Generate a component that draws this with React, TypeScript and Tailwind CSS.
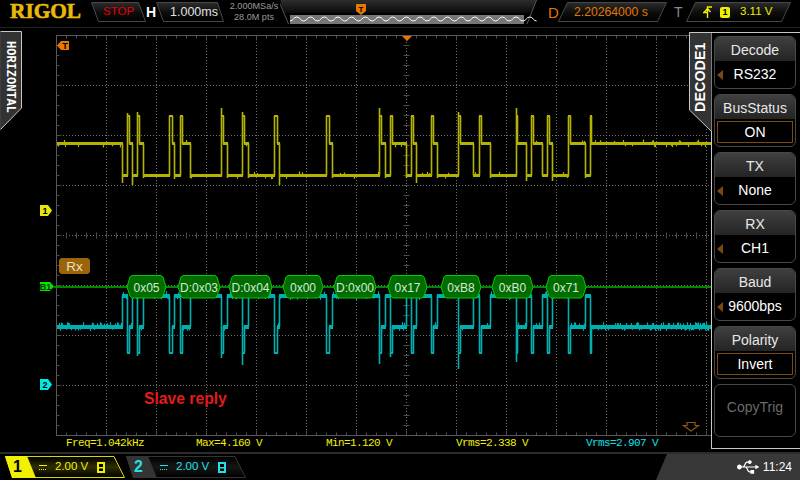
import React from "react";
import { FaUsb } from "react-icons/fa";

const EDGES = [57,122,127,129,132,137,139,143,169,172,174,180,182,190,221,223,227,242,244,248,274,277,279,326,329,332,379,381,385,390,392,406,411,413,416,431,433,437,458,460,473,479,481,490,516,517,526,531,533,542,547,549,552,568,570,585,590,591,710];

const rnd = (n: number) => {
  const v = Math.sin(n * 127.1 + 11.7) * 43758.5453;
  return v - Math.floor(v);
};

const YL = { m: 143.5, l: 175.5, t: 116 };
const BL = { m: 326.5, l: 295.5, t: 353 };
const Y_TIP: Record<number, number> = { 221: 108, 379: 108, 516: 108, 127: 113, 137: 112, 458: 112, 242: 112 };
const Y_UNDER: Record<number, number> = { 122: 183, 132: 185, 143: 178, 174: 179, 190: 178, 227: 178, 248: 178, 279: 185, 332: 178, 385: 178, 416: 183, 437: 178, 490: 178, 526: 181, 552: 181, 585: 178, 406: 178 };
const B_TIP: Record<number, number> = { 221: 358, 242: 365, 379: 364, 458: 369, 516: 362, 390: 357, 137: 356 };

function Wave({ levels, tips, under, color, noise, seed, band, tick }: { levels: { m: number; l: number; t: number }; tips: Record<number, number>; under: Record<number, number>; color: string; noise: number; seed: number; band: number; tick: number }) {
  const keys = ["m", "l", "t"] as const;
  const bands: React.ReactNode[] = [];
  let vert = "";
  let ticks = "";
  for (let i = 0; i < EDGES.length - 1; i++) {
    const k = keys[i % 3];
    const y = levels[k];
    const a = EDGES[i];
    const b = EDGES[i + 1];
    bands.push(<line key={i} x1={a} x2={b + 1} y1={y} y2={y} stroke={color} strokeWidth={k === "t" ? 2 : band} shapeRendering="crispEdges" />);
    if (i < EDGES.length - 2) {
      const next = levels[keys[(i + 1) % 3]];
      let y2 = next;
      if (k === "l") y2 = tips[b] ?? y2;
      if (k === "m" && seed === 1) y2 = under[b] ?? y2;
      vert += `M${b + 0.5} ${y}V${y2}`;
    }
    if (k !== "t") {
      for (let x = a + 1; x < b; x++) {
        const density = x < 125 ? noise * 0.7 : x > 592 ? noise * (0.8 + ((x - 592) / 118) * 0.8) : noise * 0.5;
        if (rnd(x * seed + 3) < density) {
          const up = rnd(x + 50) > 0.5;
          const len = tick + rnd(x + 90) * 1.5;
          ticks += `M${x + 0.5} ${y}V${up ? y - len : y + len}`;
        }
      }
    }
  }
  return (
    <g>
      {bands}
      <path d={vert} stroke={color} strokeWidth={1.6} fill="none" />
      <path d={ticks} stroke={color} strokeWidth={1.2} fill="none" />
    </g>
  );
}

function Grid() {
  const vx: number[] = [];
  for (let x = 106.5; x < 711; x += 50) vx.push(x);
  const hy = [85.5, 135.5, 185.5, 235.5, 285.5, 335.5, 385.5];
  let ticks = "";
  for (let x = 56.5; x < 711; x += 10) {
    const major = Math.abs((x - 56.5) % 50) < 0.1;
    const l = major ? 5 : 3;
    ticks += `M${x} 35.5v${l}M${x} 435.5v${-l}`;
  }
  for (let y = 35.5; y < 436; y += 10) {
    const major = Math.abs((y - 35.5) % 50) < 0.1;
    ticks += `M56.5 ${y}h${major ? 5 : 3}`;
    ticks += `M403.5 ${y}h6`;
  }
  for (let x = 56.5; x < 711; x += 10) ticks += `M${x} 232.5v6`;
  return (
    <g fill="none">
      {vx.map((x) => (
        <line key={x} x1={x} x2={x} y1={36} y2={435} stroke="#707070" strokeDasharray="1 2" />
      ))}
      {hy.map((y) => (
        <line key={y} x1={57} x2={711} y1={y} y2={y} stroke="#707070" strokeDasharray="1 2" />
      ))}
      <path d={ticks} stroke="#4c4c4c" />
      <path d="M56.5 435.5V35.5H711M56.5 435.5H711" stroke="#585858" />
    </g>
  );
}

const BUBBLES: [number, number, string][] = [
  [127, 166, "0x05"], [178, 220, "D:0x03"], [229, 272, "D:0x04"], [283, 323, "0x00"], [334, 376, "D:0x00"],
  [388, 427, "0x17"], [441, 481, "0xB8"], [492, 533, "0xB0"], [546, 586, "0x71"],
];

function Chart() {
  return (
    <svg viewBox="40 28 671 408" width={671} height={408} className="block" style={{ fontFamily: "'Liberation Sans', sans-serif" }}>
      <Grid />
      <Wave levels={YL} tips={Y_TIP} under={Y_UNDER} color="#b4b400" noise={0.14} seed={1} band={3} tick={2.5} />
      <Wave levels={BL} tips={B_TIP} under={{}} color="#00b0b0" noise={0.5} seed={2} band={4} tick={3} />
      <line x1={54} x2={711} y1={287} y2={287} stroke="#00b400" strokeWidth={1.3} />
      {BUBBLES.map(([a, b, t]) => (
        <g key={t + a}>
          <polygon points={`${a},287 ${a + 3},277 ${a + 5},275.5 ${b - 5},275.5 ${b - 3},277 ${b},287 ${b - 3},296 ${b - 5},298 ${a + 5},298 ${a + 3},296`} fill="#006c00" stroke="#00cc00" strokeWidth={1} />
          <text x={(a + b) / 2} y={291.5} textAnchor="middle" fontSize={12} fill="#d8e8d8">{t}</text>
        </g>
      ))}
      <polygon points="61,258 88,258 90,260 90,272 88,274 61,274 59,272 59,260" fill="#9c6408" />
      <text x={74.5} y={271} textAnchor="middle" fontSize={13.5} fill="#e8e0c8">Rx</text>
      <text x={144} y={404} fontSize={15.7} fontWeight={700} fill="#e01c1c">Slave reply</text>
      <polygon points="40,205 48,205 52,210.5 48,216 40,216" fill="#e8e800" />
      <text x={45} y={214} textAnchor="middle" fontSize={9} fontWeight={700} fill="#000">1</text>
      <polygon points="40,379 48,379 52,384.5 48,390 40,390" fill="#00e8e8" />
      <text x={45} y={388} textAnchor="middle" fontSize={9} fontWeight={700} fill="#000">2</text>
      <polygon points="40,282 50,282 54,286.5 50,291 40,291" fill="#00e800" />
      <text x={45.5} y={290} textAnchor="middle" fontSize={9} fontWeight={700} fill="#003000">B1</text>
      <polygon points="57,45.5 61,41 69,41 69,50 61,50" fill="#e87800" />
      <text x={65} y={49} textAnchor="middle" fontSize={9} fontWeight={700} fill="#000">T</text>
      <polygon points="402,36 412,36 407,41" fill="#e87800" />
      <polygon points="687,422.5 695,422.5 695,425.5 698.5,425.5 691,431 683.5,425.5 687,425.5" fill="none" stroke="#8a5a10" strokeWidth={1.2} />
    </svg>
  );
}

function Slant({ w, points, className = "", children }: { w: number; points: string; className?: string; children: React.ReactNode }) {
  const id = "g" + w;
  return (
    <div className={`relative h-[20px] flex items-center ${className}`} style={{ width: w }}>
      <svg className="absolute inset-0" width={w} height={20}>
        <defs>
          <linearGradient id={id} x1="0" x2="0" y1="0" y2="1">
            <stop offset="0" stopColor="#2c2c2c" />
            <stop offset="0.55" stopColor="#0c0c0c" />
            <stop offset="1" stopColor="#000" />
          </linearGradient>
        </defs>
        <polygon points={points} fill={`url(#${id})`} stroke="#484848" />
      </svg>
      <div className="relative w-full flex items-center">{children}</div>
    </div>
  );
}

function ZoomStrip() {
  let d = "M10 22";
  for (let x = 10; x < 243; x += 13.7) {
    d += `C${x + 3.4} 22 ${x + 3.4} 18 ${x + 6.85} 18C${x + 10.3} 18 ${x + 10.3} 22 ${x + 13.7} 22`;
  }
  return (
    <svg width={257} height={27} className="block shrink-0" style={{ fontFamily: "'Liberation Sans', sans-serif" }}>
      <defs>
        <linearGradient id="zs" x1="0" x2="0" y1="0" y2="1">
          <stop offset="0" stopColor="#303030" />
          <stop offset="1" stopColor="#0a0a0a" />
        </linearGradient>
      </defs>
      <polygon points="0,0 257,0 251,14 4,14" fill="url(#zs)" />
      <path d="M-2 0L8.5 25M257 0L247 25" stroke="#555" fill="none" />
      <rect x={10} y={16} width={234} height={9} fill="#777" />
      <path d={d} stroke="#fff" strokeWidth={1} fill="none" />
      <polygon points="76,5 86,5 86,12 81,16 76,12" fill="#e87800" />
      <text x={81} y={13} textAnchor="middle" fontSize={8} fontWeight={700} fill="#000">T</text>
    </svg>
  );
}

function TopBar() {
  return (
    <div className="h-[28px] shrink-0 flex items-center bg-black border-b border-[#222] pb-[3px]">
      <div className="ml-[10px] w-[71px] font-['Liberation_Serif'] font-bold text-[21.3px] leading-none text-[#e8b90c] [-webkit-text-stroke:0.6px_#e8b90c]">RIGOL</div>
      <Slant w={55} points="0.5,0.5 47.5,0.5 54.5,19.5 7.5,19.5" className="ml-[10px]">
        <span className="pl-[12px] text-[11.5px] text-[#e60000]">STOP</span>
      </Slant>
      <span className="w-[10px] text-center text-[14px] font-bold text-white">H</span>
      <Slant w={68} points="0.5,0.5 61.5,0.5 67.5,19.5 7.5,19.5">
        <span className="pl-[14px] text-[12.5px] text-[#e0e0e0]">1.000ms</span>
      </Slant>
      <div className="w-[56px] pl-[4px] flex flex-col items-center text-[9.1px] leading-[11px] text-[#9a9a9a]">
        <span>2.000MSa/s</span>
        <span>28.0M pts</span>
      </div>
      <ZoomStrip />
      <span className="ml-[11px] w-[10px] text-[15px] leading-none text-[#e07800]">D</span>
      <Slant w={109} points="9.5,0.5 108.5,0.5 99.5,19.5 0.5,19.5">
        <span className="pl-[16px] text-[12.2px] text-[#e07800]">2.20264000 s</span>
      </Slant>
      <span className="ml-[7px] w-[12px] text-[14px] leading-none text-[#8a8a8a]">T</span>
      <Slant w={105} points="9.5,0.5 104.5,0.5 95.5,19.5 0.5,19.5">
        <div className="flex items-center pl-[17px] gap-[8px]">
          <svg width={9} height={12} viewBox="0 0 9 12" className="shrink-0">
            <path d="M0 6.5H4.5M4.5 12V1H9M4.5 2.5L1.5 6M4.5 2.5L7.5 6" stroke="#f0f000" strokeWidth={1.4} fill="none" />
          </svg>
          <span className="w-[10px] h-[11px] rounded-[2px] bg-[#f0f000] text-black text-[9px] font-bold leading-[11px] text-center">1</span>
          <span className="ml-[2px] text-[11.5px] text-[#f0f000]">3.11 V</span>
        </div>
      </Slant>
    </div>
  );
}

function LeftTab() {
  return (
    <div className="w-[40px] shrink-0 pt-[3px]">
      <div className="relative w-[22px] h-[100px]">
        <svg className="absolute inset-0" width={22} height={100}>
          <polygon points="0,0.5 21.5,0.5 21.5,77 0,99" fill="#333" stroke="#c8c8c8" />
          <line x1={0} x2={0} y1={0} y2={100} stroke="#000" />
        </svg>
        <div className="relative pt-[10px] pl-[3px] [writing-mode:vertical-rl] font-['Liberation_Mono'] font-bold text-[12px] leading-[14px] text-white">HORIZONTAL</div>
      </div>
    </div>
  );
}

function Btn({ title, value, boxed, arrow }: { title: string; value: string; boxed?: boolean; arrow?: boolean }) {
  return (
    <div className="relative h-[53px] rounded-[6px] border border-[#484848] overflow-hidden bg-black text-center text-[14px] text-[#e8e8e8]">
      <div className="h-[24px] leading-[26px] bg-gradient-to-b from-[#404040] to-[#242424]">{title}</div>
      {boxed ? (
        <div className="mx-[2px] mt-[2px] h-[22px] border border-[#7a4a10] leading-[20px] text-white">{value}</div>
      ) : (
        <div className="relative h-[26px] leading-[27px] text-white">
          {arrow && <span className="absolute left-[2px] top-[9px] w-0 h-0 border-y-[5.5px] border-y-transparent border-r-[6px] border-r-[#7a4a10]" />}
          {value}
        </div>
      )}
    </div>
  );
}

function RightPanel() {
  return (
    <div className="relative w-[89px] shrink-0 pt-[4px]">
      <div className="absolute left-[-22px] top-[4px] w-[23px] h-[101px]">
        <svg className="absolute inset-0" width={23} height={101}>
          <polygon points="0.5,0.5 23,0.5 23,100 0.5,78" fill="#333" stroke="#c8c8c8" />
        </svg>
        <div className="relative w-[22px] h-[80px] flex justify-center pt-[9px]">
          <span className="[writing-mode:vertical-rl] rotate-180 font-bold text-[14.4px] leading-[16px] text-white">DECODE1</span>
        </div>
      </div>
      <div className="h-[417px] border-t border-l border-b border-[#c8c8c8] pt-[3px] pl-[2px] pr-[4px] flex flex-col gap-[5px] bg-black">
        <Btn title="Decode" value="RS232" arrow />
        <Btn title="BusStatus" value="ON" boxed />
        <Btn title="TX" value="None" arrow />
        <Btn title="RX" value="CH1" arrow />
        <Btn title="Baud" value="9600bps" arrow />
        <Btn title="Polarity" value="Invert" boxed />
        <div className="h-[53px] rounded-[6px] border border-[#484848] flex items-center justify-center pb-[6px] text-[14px] text-[#6a6a6a]">CopyTrig</div>
      </div>
    </div>
  );
}

function Measure({ text, color }: { text: string; color: string }) {
  return <span className={`w-[130px] shrink-0 whitespace-pre ${color}`}>{text}</span>;
}

function Channel({ n, color, left, stroke, id, tint, numColor }: { n: string; color: string; left: string; stroke: string; id: string; tint: string; numColor: string }) {
  return (
    <div className="relative w-[120px] h-[22px] shrink-0 flex items-center">
      <svg className="absolute inset-0" width={120} height={22}>
        <defs>
          <linearGradient id={id} x1="0" x2="0" y1="0" y2="1">
            <stop offset="0" stopColor="#000" />
            <stop offset="0.5" stopColor={tint} />
            <stop offset="1" stopColor="#000" />
          </linearGradient>
        </defs>
        <polygon points="0.5,0.5 109,0.5 119.5,21.5 7.5,21.5" fill={`url(#${id})`} stroke={stroke} />
        <polygon points="0,0 22,0 31,22 7,22" fill={left} />
      </svg>
      <span className="relative w-[28px] pl-[8px] text-[16px] font-bold leading-none" style={{ color: numColor }}>{n}</span>
      <svg className="relative ml-[6px]" width={8} height={5}>
        <path d="M0 0.5H8" stroke={color} />
        <path d="M0 4.5H8" stroke={color} strokeDasharray="1 1" />
      </svg>
      <span className="relative ml-[8px] text-[11.5px] leading-none" style={{ color }}>2.00 V</span>
      <svg className="relative ml-[9px]" width={8} height={11}>
        <rect x={0} y={0} width={8} height={11} fill={color} />
        <rect x={2} y={2} width={4} height={3} fill="#000" />
        <rect x={2} y={6.5} width={4} height={2.5} fill="#000" />
      </svg>
    </div>
  );
}

function BottomBar() {
  return (
    <div className="h-[28px] shrink-0 relative border-t-2 border-[#2c2c2c] bg-black flex items-center pl-[5px] gap-[1px]">
      <Channel n="1" color="#f0f000" left="#f0f000" stroke="#d8d800" id="c1" tint="#2e2e00" numColor="#000" />
      <Channel n="2" color="#22e0e8" left="#343434" stroke="#343434" id="c2" tint="#161616" numColor="#22e0e8" />
      <div className="ml-auto h-full w-[144px] bg-[#383838] [clip-path:polygon(11px_0,100%_0,100%_100%,0_100%)] flex items-center justify-end gap-[4px] pr-[8px] text-[12px] text-white">
        <FaUsb size={22} />
        <span>11:24</span>
      </div>
    </div>
  );
}

export default function App() {
  return (
    <div className="w-[800px] h-[480px] overflow-hidden bg-black flex flex-col font-['Liberation_Sans',sans-serif]">
      <TopBar />
      <div className="h-[424px] flex">
        <LeftTab />
        <div className="w-[671px] shrink-0 flex flex-col">
          <Chart />
          <div className="flex pl-[26px] font-['Liberation_Mono'] text-[11px] tracking-[-0.6px] leading-[14px]">
            <Measure text="Freq=1.042kHz" color="text-[#f0f000]" />
            <Measure text="Max=4.160 V" color="text-[#f0f000]" />
            <Measure text="Min=1.120 V" color="text-[#f0f000]" />
            <Measure text="Vrms=2.338 V" color="text-[#f0f000]" />
            <Measure text="Vrms=2.907 V" color="text-[#10e0e8]" />
          </div>
        </div>
        <RightPanel />
      </div>
      <BottomBar />
    </div>
  );
}
